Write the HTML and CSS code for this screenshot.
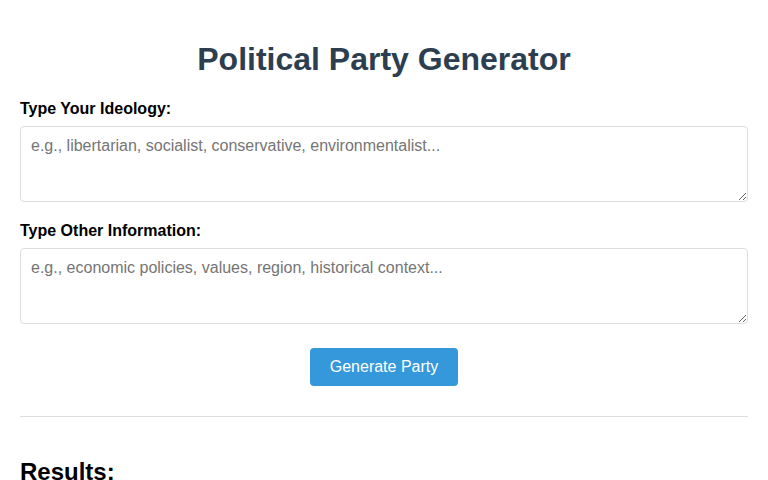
FILE: index.html
```html
<!DOCTYPE html>
<html lang="en">
<head>
    <meta charset="UTF-8">
    <meta name="viewport" content="width=device-width, initial-scale=1.0">
    <title>Political Party Generator</title>
    <link rel="stylesheet" href="styles.css">
</head>
<body>
    <div class="container">
        <h1>Political Party Generator</h1>
        <div class="form-group">
            <label for="ideology">Type Your Ideology:</label>
            <textarea id="ideology" placeholder="e.g., libertarian, socialist, conservative, environmentalist..."></textarea>
        </div>
        <div class="form-group">
            <label for="otherInfo">Type Other Information:</label>
            <textarea id="otherInfo" placeholder="e.g., economic policies, values, region, historical context..."></textarea>
        </div>
        <div class="actions">
            <button type="button" id="generateBtn">Generate Party</button>
        </div>
        <hr>
        <div id="results">
            <h2>Results:</h2>
        </div>
    </div>
</body>
</html>
```

FILE: styles.css
```css
body { font-family: "Liberation Sans", Arial, sans-serif; margin: 0; color: #000; background: #fff; }
.container { padding: 20px; }
h1 { text-align: center; color: #2c3e50; font-size: 32px; margin: 21px 0 22px; }
.form-group { margin-bottom: 20px; }
label { display: block; font-weight: bold; font-size: 16px; margin-bottom: 8px; }
textarea {
    display: block;
    width: 100%;
    height: 76px;
    box-sizing: border-box;
    padding: 10px;
    font-family: "Liberation Sans", Arial, sans-serif;
    font-size: 16px;
    border: 1px solid #ddd;
    border-radius: 4px;
}
textarea::placeholder { color: #757575; }
.actions { text-align: center; margin-top: 24px; }
button {
    background-color: #3498db;
    color: #fff;
    border: none;
    border-radius: 4px;
    padding: 10px 20px;
    font-family: "Liberation Sans", Arial, sans-serif;
    font-size: 16px;
    cursor: pointer;
}
hr { border: none; border-top: 1px solid #ddd; margin: 30px 0 0; }
#results { padding-top: 41px; }
#results h2 { font-size: 24px; margin: 0 0 20px; }
```
